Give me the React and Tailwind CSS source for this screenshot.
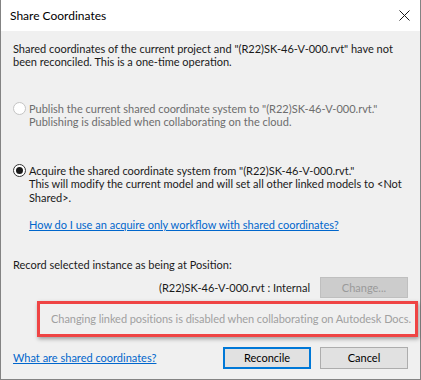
import React from 'react';

function Radio({ checked, disabled }) {
  return (
    <span
      className={`w-[13px] h-[13px] shrink-0 rounded-full border bg-white flex items-center justify-center ${
        disabled ? 'border-[#c4c4c4]' : 'border-[#333333]'
      }`}
    >
      {checked && <span className="w-[7px] h-[7px] rounded-full bg-[#1a1a1a]" />}
    </span>
  );
}

export default function App() {
  return (
    <div className="w-[421px] h-[380px] flex flex-col bg-[#f0f0f0] border-x border-b border-[#838383] text-[11px] leading-[13.3px] text-[#1a1a1a] font-['Lato','Liberation_Sans',sans-serif]">
      {/* Title bar */}
      <div className="h-[31px] shrink-0 bg-white flex items-center justify-between pl-[9px] pr-[9px]">
        <span className="text-[12px] text-black">Share Coordinates</span>
        <svg width="11" height="11" viewBox="0 0 11 11" className="mr-[1px]">
          <path d="M0.5 0.5 L10.5 10.5 M10.5 0.5 L0.5 10.5" stroke="#1a1a1a" strokeWidth="1" />
        </svg>
      </div>

      {/* Body */}
      <div className="flex flex-col pl-[12px] pr-[2px] pt-[11px]">
        <p className="pr-[18px]">
          Shared coordinates of the current project and "(R22)SK-46-V-000.rvt" have not been reconciled. This is a one-time operation.
        </p>

        <label className="mt-[33px] flex items-start gap-[3px] text-[#6d6d6d]">
          <Radio disabled />
          <span>
            Publish the current shared coordinate system to "(R22)SK-46-V-000.rvt."
            <br />
            Publishing is disabled when collaborating on the cloud.
          </span>
        </label>

        <label className="mt-[36px] flex items-start gap-[3px] pr-[4px]">
          <Radio checked />
          <span>
            Acquire the shared coordinate system from "(R22)SK-46-V-000.rvt."
            <br />
            This will modify the current model and will set all other linked models to &lt;Not Shared&gt;.
          </span>
        </label>

        <a className="mt-[14px] ml-[16px] text-[#0066cc] underline">
          How do I use an acquire only workflow with shared coordinates?
        </a>

        <p className="mt-[27px]">Record selected instance as being at Position:</p>

        <div className="mt-[5px] flex items-center justify-end gap-[10px] pr-[10px]">
          <span>(R22)SK-46-V-000.rvt : Internal</span>
          <div className="w-[88px] h-[21px] bg-[#cccccc] border border-[#bfbfbf] flex items-center justify-center text-[#9a9a9a]">
            Change...
          </div>
        </div>

        <div className="mt-[3px] ml-[24px] h-[36px] border-[3px] border-[#ef4444] flex items-center pl-[11px] text-[#a0a0a0] whitespace-nowrap tracking-[-0.05px] shadow-[1px_2px_4px_rgba(0,0,0,0.35)]">
          Changing linked positions is disabled when collaborating on Autodesk Docs.
        </div>

        <div className="mt-[10px] flex items-center pr-[10px]">
          <a className="text-[#0066cc] underline flex-1">What are shared coordinates?</a>
          <div className="w-[88px] h-[22px] bg-[#e1e1e1] border-2 border-[#0078d7] flex items-center justify-center text-black">
            Reconcile
          </div>
          <div className="ml-[9px] w-[88px] h-[22px] bg-[#e1e1e1] border border-[#adadad] flex items-center justify-center text-black">
            Cancel
          </div>
        </div>
      </div>
    </div>
  );
}
